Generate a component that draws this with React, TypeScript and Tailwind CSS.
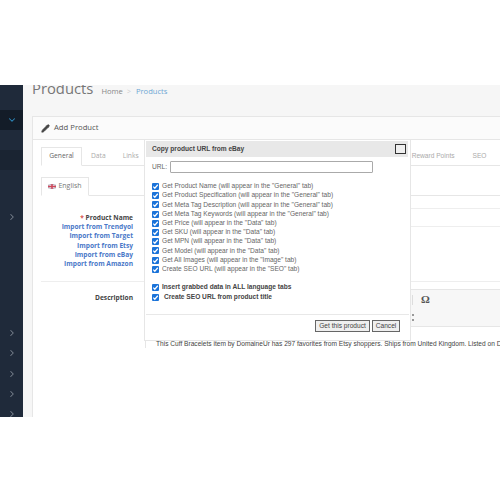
import { Pencil, ChevronDown, ChevronRight } from "lucide-react";

const grabOptions = [
  'Get Product Name (will appear in the "General" tab)',
  'Get Product Specification (will appear in the "General" tab)',
  'Get Meta Tag Description (will appear in the "General" tab)',
  'Get Meta Tag Keywords (will appear in the "General" tab)',
  'Get Price (will appear in the "Data" tab)',
  'Get SKU (will appear in the "Data" tab)',
  'Get MPN (will appear in the "Data" tab)',
  'Get Model (will appear in the "Data" tab)',
  'Get All Images (will appear in the "Image" tab)',
  'Create SEO URL (will appear in the "SEO" tab)',
];

const imports = ["Import from Trendyol", "Import from Target", "Import from Etsy", "Import from eBay", "Import from Amazon"];

function Check() {
  return (
    <span className="flex h-[7px] w-[7px] shrink-0 items-center justify-center rounded-[1px] bg-[#1a73d9]">
      <svg viewBox="0 0 8 8" className="h-[7px] w-[7px]" fill="none" stroke="white" strokeWidth="1.4">
        <path d="M1.5 4.2 3.2 6 6.6 2" />
      </svg>
    </span>
  );
}

function SideRow({ height, tone, icon }: { height: number; tone?: string; icon?: "down" | "right" }) {
  return (
    <div className="flex items-center justify-center" style={{ height, background: tone ?? "#1f2a3a" }}>
      {icon === "down" && <ChevronDown size={10} className="text-[#2f8fc4]" strokeWidth={2.5} />}
      {icon === "right" && <ChevronRight size={10} className="text-[#77808c]" strokeWidth={2.5} />}
    </div>
  );
}

function CopyDialog() {
  return (
    <div className="absolute left-[144px] top-[54px] z-10 h-[202px] w-[267px] border border-[#e6e6e6] bg-white px-px pt-[1px] font-['Liberation_Sans',sans-serif] text-[#666]">
      <div className="mr-px flex h-[16px] items-center justify-between bg-[#e8e8e8] pl-[6px] pr-[2px]">
        <span className="text-[6.6px] font-bold text-[#444]">Copy product URL from eBay</span>
        <span className="h-[10px] w-[11px] border border-[#333] bg-[#efefef]" />
      </div>
      <div className="mt-[4px] flex items-center pl-[6px] text-[6.6px]">
        <span className="mr-[3px]">URL:</span>
        <span className="h-[12px] w-[203px] rounded-[1px] border border-[#aaa] bg-white" />
      </div>
      <div className="mt-[9px] flex flex-col pl-[6px]">
        {grabOptions.map((label) => (
          <div key={label} className="flex h-[9.2px] items-center gap-[3px] text-[6.6px] leading-none">
            <Check />
            <span>{label}</span>
          </div>
        ))}
      </div>
      <div className="mt-[9px] flex flex-col pl-[6px] text-[6.6px] font-bold leading-none text-[#444]">
        <div className="flex h-[9.5px] items-center gap-[3px]">
          <Check />
          <span>Insert grabbed data in ALL language tabs</span>
        </div>
        <div className="flex h-[9.5px] items-center gap-[5px]">
          <Check />
          <span>Create SEO URL from product title</span>
        </div>
      </div>
      <div className="mt-[12px] flex justify-end gap-[2px] border-t border-[#e8e8e8] pr-[9px] pt-[5px] text-[6.6px] text-[#444]">
        <span className="flex h-[12px] w-[55px] items-center justify-center border border-[#666] bg-[#efefef]">Get this product</span>
        <span className="flex h-[12px] w-[28px] items-center justify-center border border-[#666] bg-[#efefef]">Cancel</span>
      </div>
    </div>
  );
}

export default function App() {
  return (
    <div className="h-[500px] w-[500px] overflow-hidden bg-white font-['Open_Sans',sans-serif]">
      <div className="mt-[85px] flex h-[332px] overflow-hidden">
        <div className="w-[23px] shrink-0 bg-[#1f2a3a]">
          <SideRow height={25} />
          <SideRow height={20} tone="#131c28" icon="down" />
          <SideRow height={20} />
          <SideRow height={20} tone="#1a2432" />
          <SideRow height={35} />
          <SideRow height={23} icon="right" />
          <SideRow height={94} />
          <SideRow height={21} icon="right" />
          <SideRow height={20} icon="right" />
          <SideRow height={21} icon="right" />
          <SideRow height={20} icon="right" />
          <SideRow height={20} icon="right" />
        </div>
        <div className="relative min-w-0 flex-1 bg-[#f6f6f6] pl-[9px]">
          <div className="flex h-[31px] items-start whitespace-nowrap">
            <span className="-mt-[6px] text-[14.8px] leading-[19px] text-[#777]">Products</span>
            <span className="ml-[8px] mt-[2px] text-[7.6px] leading-[9px] text-[#888]">Home</span>
            <span className="ml-[4px] mt-[2px] text-[7px] leading-[9px] text-[#ccc]">&gt;</span>
            <span className="ml-[5px] mt-[2px] text-[7.6px] leading-[9px] text-[#6ea6d4]">Products</span>
          </div>
          <div className="border-l border-t border-[#e6e6e6]">
            <div className="flex h-[23px] items-center gap-[4px] border-b border-[#e6e6e6] bg-[#fbfbfb] pl-[8px] text-[7.7px] text-[#555]">
              <Pencil size={9} fill="#444" className="text-[#444]" />
              Add Product
            </div>
            <div className="h-[300px] bg-white pl-[8px]">
              <div className="flex h-[26px] items-end border-b border-[#e6e6e6] whitespace-nowrap text-[6.7px] text-[#aaa]">
                <span className="-mb-px flex h-[19px] w-[41px] shrink-0 items-center justify-center border border-[#e6e6e6] border-b-white text-[#666]">General</span>
                <span className="ml-[9px] flex h-[18px] shrink-0 items-center">Data</span>
                <span className="ml-[17px] flex h-[18px] shrink-0 items-center">Links</span>
                <span className="ml-[273px] flex h-[18px] shrink-0 items-center font-['Liberation_Sans',sans-serif] text-[6.6px]">Reward Points</span>
                <span className="ml-[18px] flex h-[18px] shrink-0 items-center font-['Liberation_Sans',sans-serif] text-[6.6px]">SEO</span>
              </div>
              <div className="mt-[12px] flex h-[18px] items-end border-b border-[#e6e6e6] text-[7px] text-[#777]">
                <span className="-mb-px flex h-[19px] w-[48px] shrink-0 items-center justify-center gap-[2px] border border-[#e6e6e6] border-b-white">
                  <svg viewBox="0 0 8 5" className="h-[5px] w-[8px]">
                    <rect width="8" height="5" fill="#b9b4c4" />
                    <path d="M0 0 8 5M8 0 0 5" stroke="#eee" strokeWidth="1" />
                    <path d="M4 0V5M0 2.5H8" stroke="#d0475a" strokeWidth="1.4" />
                  </svg>
                  English
                </span>
              </div>
              <div className="flex">
                <div className="w-[92px] shrink-0 whitespace-nowrap text-right text-[6.6px] font-bold leading-[9.2px]">
                  <div className="mt-[17px] text-[#444]">
                    <span className="text-[#d9534f]">* </span>Product Name
                  </div>
                  {imports.map((name) => (
                    <div key={name} className="text-[#4a78c8]">{name}</div>
                  ))}
                </div>
                <div className="ml-[12px] min-w-0 flex-1">
                  <div className="h-[13px] border-b border-[#eee]" />
                  <div className="h-[18px] border-b border-[#eee]" />
                </div>
              </div>
              <div className="mt-[13px] flex border-t border-[#eee] pt-[11px]">
                <div className="w-[92px] shrink-0 text-right text-[6.6px] font-bold text-[#444]">Description</div>
                <div className="ml-[12px] mt-[-4px] min-w-0 flex-1 border-l border-[#e6e6e6]">
                  <div className="h-[38px] border-b border-t border-[#e6e6e6] bg-[#f7f7f7] pl-[266px] pt-[3px]">
                    <div className="flex items-center gap-[8px] font-['Liberation_Serif',serif] text-[11px] font-bold leading-[13px] text-[#555]">
                      <span className="h-[10px] w-px bg-[#ddd]" />
                      Ω
                    </div>
                    <div className="mt-[8px] h-[7px] w-[2px] border-y-2 border-[#999]" />
                  </div>
                  <p className="mt-[14px] whitespace-nowrap pl-[10px] font-['Liberation_Sans',sans-serif] text-[6.6px] leading-none text-[#444]">
                    This Cuff Bracelets item by DomaineUr has 297 favorites from Etsy shoppers. Ships from United Kingdom. Listed on D
                  </p>
                </div>
              </div>
            </div>
          </div>
        </div>
      </div>
      <div className="pointer-events-none absolute left-0 top-[85px]">
        <CopyDialog />
      </div>
    </div>
  );
}
